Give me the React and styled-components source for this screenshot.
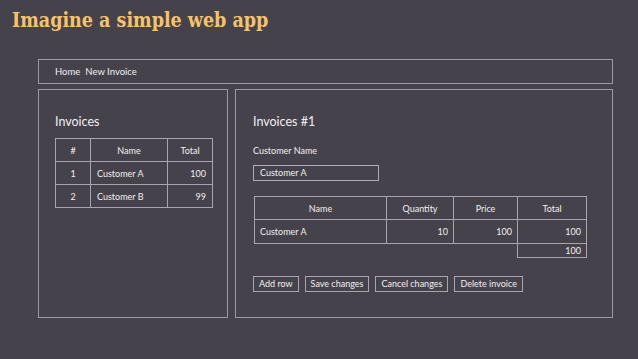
import React from 'react'
import styled, { createGlobalStyle } from 'styled-components'

const GlobalStyle = createGlobalStyle`
    html, body {
        margin: 0;
        padding: 0;
        background: #46424b;
    }
    body {
        font-family: 'Lato', 'Liberation Sans', sans-serif;
        color: #f1eff3;
    }
`

const invoices = [
    { id: 1, name: 'Customer A', total: 100 },
    { id: 2, name: 'Customer B', total: 99 },
]

const lines = [{ name: 'Customer A', quantity: 10, price: 100, total: 100 }]

function App() {
    return (
        <>
            <GlobalStyle />
            <Page>
                <Title>Imagine a simple web app</Title>
                <Frame>
                    <Nav>
                        <NavLink>Home</NavLink>
                        <NavLink>New Invoice</NavLink>
                    </Nav>
                    <Columns>
                        <Panel>
                            <Heading>Invoices</Heading>
                            <Table>
                                <colgroup>
                                    <col style={{ width: 35 }} />
                                    <col style={{ width: 77 }} />
                                    <col style={{ width: 45 }} />
                                </colgroup>
                                <thead>
                                    <tr>
                                        <Th>#</Th>
                                        <Th>Name</Th>
                                        <Th>Total</Th>
                                    </tr>
                                </thead>
                                <tbody>
                                    {invoices.map((inv) => (
                                        <tr key={inv.id}>
                                            <Td align='center'>{inv.id}</Td>
                                            <Td>{inv.name}</Td>
                                            <Td align='right'>{inv.total}</Td>
                                        </tr>
                                    ))}
                                </tbody>
                            </Table>
                        </Panel>
                        <Panel wide>
                            <Heading>Invoices #1</Heading>
                            <Label>Customer Name</Label>
                            <Input>Customer A</Input>
                            <LineTable>
                                <colgroup>
                                    <col style={{ width: 132 }} />
                                    <col style={{ width: 67 }} />
                                    <col style={{ width: 64 }} />
                                    <col style={{ width: 69 }} />
                                </colgroup>
                                <thead>
                                    <tr>
                                        <LineTh>Name</LineTh>
                                        <LineTh>Quantity</LineTh>
                                        <LineTh>Price</LineTh>
                                        <LineTh>Total</LineTh>
                                    </tr>
                                </thead>
                                <tbody>
                                    {lines.map((line) => (
                                        <tr key={line.name}>
                                            <LineTd>{line.name}</LineTd>
                                            <LineTd align='right'>{line.quantity}</LineTd>
                                            <LineTd align='right'>{line.price}</LineTd>
                                            <LineTd align='right'>{line.total}</LineTd>
                                        </tr>
                                    ))}
                                    <tr>
                                        <Blank colSpan={3} />
                                        <SumTd>100</SumTd>
                                    </tr>
                                </tbody>
                            </LineTable>
                            <Buttons>
                                <Button>Add row</Button>
                                <Button>Save changes</Button>
                                <Button>Cancel changes</Button>
                                <Button>Delete invoice</Button>
                            </Buttons>
                        </Panel>
                    </Columns>
                </Frame>
            </Page>
        </>
    )
}

export default App

const Page = styled.div`
    width: 638px;
    height: 359px;
    box-sizing: border-box;
    padding: 8px 0 0 12px;
`

const Title = styled.h1`
    margin: 0;
    font-family: 'DejaVu Serif', 'Liberation Serif', serif;
    font-stretch: condensed;
    font-weight: bold;
    font-size: 19.5px;
    line-height: 26px;
    color: #f6c26b;
`

const Frame = styled.div`
    margin: 25px 0 0 26px;
    width: 575px;
    display: flex;
    flex-direction: column;
    gap: 5px;
`

const Nav = styled.nav`
    height: 25px;
    box-sizing: border-box;
    border: 1px solid #9d99a3;
    display: flex;
    align-items: center;
    gap: 5px;
    padding: 0 16px;
`

const NavLink = styled.span`
    font-size: 9.5px;
`

const Columns = styled.div`
    display: grid;
    grid-template-columns: 190px 378px;
    gap: 7px;
`

const Panel = styled.section`
    height: 229px;
    box-sizing: border-box;
    border: 1px solid #9d99a3;
    padding: 24px 16px 0 ${(p) => (p.wide ? '17px' : '16px')};
    display: flex;
    flex-direction: column;
    align-items: flex-start;
`

const Heading = styled.h2`
    margin: 0;
    font-size: 12.5px;
    font-weight: normal;
    line-height: 16px;
`

const Table = styled.table`
    margin-top: 8px;
    border-collapse: collapse;
    table-layout: fixed;
    width: 157px;
    font-size: 9px;
`

const Th = styled.th`
    border: 1px solid #a9a5ae;
    height: 22px;
    padding: 0 6px;
    font-weight: normal;
    text-align: center;
`

const Td = styled.td`
    border: 1px solid #a9a5ae;
    height: 22px;
    padding: 0 6px;
    text-align: ${(p) => p.align || 'left'};
`

const Label = styled.div`
    margin-top: 15px;
    font-size: 9px;
    line-height: 12px;
`

const Input = styled.div`
    margin-top: 8px;
    width: 126px;
    height: 16px;
    box-sizing: border-box;
    border: 1px solid #b0acb5;
    padding: 0 6px;
    font-size: 9px;
    line-height: 14px;
`

const LineTable = styled.table`
    margin: 15px 0 0 1px;
    border-collapse: collapse;
    table-layout: fixed;
    width: 332px;
    font-size: 9px;
`

const LineTh = styled.th`
    border: 1px solid #a9a5ae;
    height: 22px;
    padding: 0 5px;
    font-weight: normal;
    text-align: center;
`

const LineTd = styled.td`
    border: 1px solid #a9a5ae;
    height: 23px;
    padding: 0 5px;
    text-align: ${(p) => p.align || 'left'};
`

const Blank = styled.td`
    border: none;
    border-top: 1px solid #a9a5ae;
`

const SumTd = styled.td`
    border: 1px solid #a9a5ae;
    height: 13px;
    padding: 0 5px;
    text-align: right;
`

const Buttons = styled.div`
    margin-top: 18px;
    display: flex;
    gap: 6px;
`

const Button = styled.button`
    background: transparent;
    border: 1px solid #a9a5ae;
    color: #f1eff3;
    font-family: inherit;
    font-size: 9px;
    height: 16px;
    padding: 0 5px;
    line-height: 14px;
    cursor: pointer;
`
